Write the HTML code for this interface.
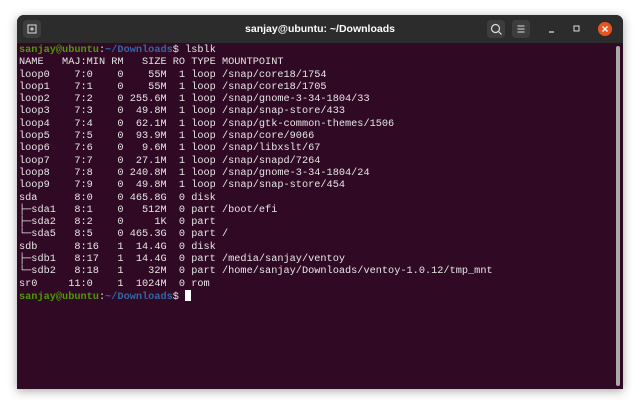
<!DOCTYPE html>
<html><head><style>
body{margin:0;width:640px;height:408px;background:#fff;position:relative;overflow:hidden}
.win{position:absolute;left:17px;top:15px;width:606px;height:374px;background:#300a24;border-radius:7px 7px 0 0;box-shadow:0 2px 10px rgba(0,0,0,.35);overflow:hidden}
.tb{height:28px;background:#2c2c2c;position:relative;color:#fff;font:bold 10.5px "Liberation Sans",sans-serif}
.tb .t{position:absolute;left:0;right:0;top:8px;text-align:center}
.btn{position:absolute;top:5px;width:18px;height:18px;border-radius:4px;background:#3d3d3d}
pre{margin:0;position:absolute;left:2px;top:29px;font:10.25px/12.3px "Liberation Mono",monospace;color:#e6e6e6}
.g{color:#4e9a06;font-weight:bold}.b{color:#3465a4;font-weight:bold}
.cur{display:inline-block;width:6px;height:11px;background:#fff;vertical-align:-2px}
.sb{position:absolute;right:3px;top:31px;width:4px;height:340px;background:#aaa;border-radius:2px}
</style></head><body>
<div class="win">
<div class="tb">
<div class="btn" style="left:6px"><svg width="18" height="18"><rect x="5" y="5" width="8" height="8" fill="none" stroke="#ddd" stroke-width="1"/><path d="M9 7v4M7 9h4" stroke="#ddd"/></svg></div>
<div class="t">sanjay@ubuntu: ~/Downloads</div>
<div class="btn" style="left:470px"><svg width="18" height="18"><circle cx="8.5" cy="8.5" r="4" fill="none" stroke="#ddd" stroke-width="1.2"/><path d="M11.5 11.5l3 3" stroke="#ddd" stroke-width="1.2"/></svg></div>
<div class="btn" style="left:495px"><svg width="18" height="18"><path d="M5.5 6h7M5.5 9h7M5.5 12h7" stroke="#ddd"/></svg></div>
<svg style="position:absolute;left:525px;top:5px" width="80" height="18"><path d="M7 12h5" stroke="#ddd" stroke-width="1.2"/><rect x="32" y="6" width="5" height="5" fill="none" stroke="#ddd"/><circle cx="63" cy="9" r="7" fill="#e95420"/><path d="M60.5 6.5l5 5M65.5 6.5l-5 5" stroke="#fff" stroke-width="1.4"/></svg>
</div>
<pre><span class="g">sanjay@ubuntu</span>:<span class="b">~/Downloads</span>$ lsblk
NAME   MAJ:MIN RM   SIZE RO TYPE MOUNTPOINT
loop0    7:0    0    55M  1 loop /snap/core18/1754
loop1    7:1    0    55M  1 loop /snap/core18/1705
loop2    7:2    0 255.6M  1 loop /snap/gnome-3-34-1804/33
loop3    7:3    0  49.8M  1 loop /snap/snap-store/433
loop4    7:4    0  62.1M  1 loop /snap/gtk-common-themes/1506
loop5    7:5    0  93.9M  1 loop /snap/core/9066
loop6    7:6    0   9.6M  1 loop /snap/libxslt/67
loop7    7:7    0  27.1M  1 loop /snap/snapd/7264
loop8    7:8    0 240.8M  1 loop /snap/gnome-3-34-1804/24
loop9    7:9    0  49.8M  1 loop /snap/snap-store/454
sda      8:0    0 465.8G  0 disk 
├─sda1   8:1    0   512M  0 part /boot/efi
├─sda2   8:2    0     1K  0 part 
└─sda5   8:5    0 465.3G  0 part /
sdb      8:16   1  14.4G  0 disk 
├─sdb1   8:17   1  14.4G  0 part /media/sanjay/ventoy
└─sdb2   8:18   1    32M  0 part /home/sanjay/Downloads/ventoy-1.0.12/tmp_mnt
sr0     11:0    1  1024M  0 rom  
<span class="g">sanjay@ubuntu</span>:<span class="b">~/Downloads</span>$ <span class="cur"></span></pre>
<div class="sb"></div>
</div>
</body></html>
